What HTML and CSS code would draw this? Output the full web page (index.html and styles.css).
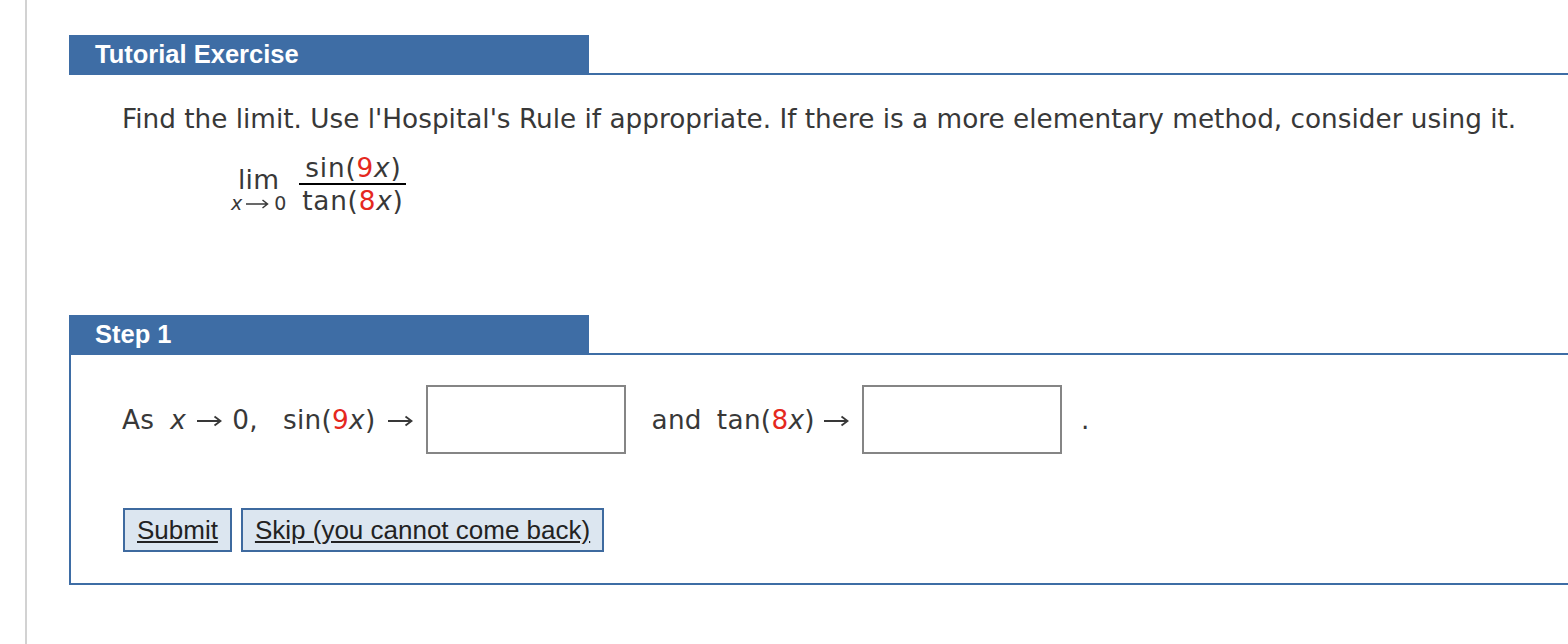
FILE: index.html
```html
<!DOCTYPE html>
<html>
<head>
<meta charset="utf-8">
<link rel="stylesheet" href="styles.css">
</head>
<body>
<div class="page">
  <section class="sec sec-tutorial">
    <div class="sec-head"><div class="tab">Tutorial Exercise</div></div>
    <div class="problem">
      <p class="prompt">Find the limit. Use l'Hospital's Rule if appropriate. If there is a more elementary method, consider using it.</p>
      <div class="limit">
        <div class="lim-col">
          <span class="lim">lim</span>
          <span class="sub"><i>x</i><svg class="arr-s" width="24" height="10" viewBox="0 0 24 10"><path d="M1 5H22.5M17.5 1L22.5 5L17.5 9" fill="none" stroke="#383838" stroke-width="1.5"/></svg>0</span>
        </div>
        <div class="frac">
          <span class="num">sin(<span class="red">9</span><i>x</i>)</span>
          <span class="den">tan(<span class="red">8</span><i>x</i>)</span>
        </div>
      </div>
    </div>
  </section>

  <section class="sec sec-step">
    <div class="sec-head"><div class="tab">Step 1</div></div>
    <div class="step-body">
      <div class="row">
        <span class="t-as">As</span>
        <i class="t-x">x</i>
        <svg class="arr" width="26" height="12" viewBox="0 0 26 12"><path d="M1 6H24.5M18.5 1.5L24.5 6L18.5 10.5" fill="none" stroke="#383838" stroke-width="1.8"/></svg>
        <span class="t-zero">0,</span>
        <span class="t-fn t-sin">sin(<span class="red">9</span><i>x</i>)</span>
        <svg class="arr" width="26" height="12" viewBox="0 0 26 12"><path d="M1 6H24.5M18.5 1.5L24.5 6L18.5 10.5" fill="none" stroke="#383838" stroke-width="1.8"/></svg>
        <span class="box"></span>
        <span class="t-and">and</span>
        <span class="t-fn t-tan">tan(<span class="red">8</span><i>x</i>)</span>
        <svg class="arr" width="26" height="12" viewBox="0 0 26 12"><path d="M1 6H24.5M18.5 1.5L24.5 6L18.5 10.5" fill="none" stroke="#383838" stroke-width="1.8"/></svg>
        <span class="box"></span>
        <span class="t-dot">.</span>
      </div>
      <div class="buttons">
        <button class="btn">Submit</button>
        <button class="btn">Skip (you cannot come back)</button>
      </div>
    </div>
  </section>
</div>
</body>
</html>
```

FILE: styles.css
```css
html, body {
  margin: 0;
  padding: 0;
  background: #ffffff;
  overflow: hidden;
}
body {
  font-family: "DejaVu Sans", Verdana, sans-serif;
  color: #383838;
}
.page {
  margin-left: 25px;
  border-left: 2px solid #d2d2d2;
  min-height: 644px;
  padding-left: 42px;
  padding-top: 35px;
  box-sizing: border-box;
}
.sec {
  width: 1540px;
}
.sec-head {
  border-bottom: 2px solid #3e6da5;
  display: flex;
}
.tab {
  width: 520px;
  height: 38px;
  background: #3e6da5;
  color: #ffffff;
  font-family: "Liberation Sans", Arial, sans-serif;
  font-weight: bold;
  font-size: 25.5px;
  line-height: 38px;
  padding-left: 26px;
  box-sizing: border-box;
}
.problem {
  padding-left: 53px;
  padding-top: 30px;
  height: 240px;
  box-sizing: border-box;
}
.prompt {
  margin: 0;
  font-size: 26.3px;
  line-height: 28px;
}
.limit {
  display: flex;
  align-items: flex-end;
  margin-left: 109px;
  margin-top: 21px;
}
.lim-col {
  display: flex;
  flex-direction: column;
  align-items: center;
  padding-bottom: 3px;
}
.lim {
  font-size: 26.5px;
  line-height: 24px;
  letter-spacing: 0.3px;
}
.sub {
  font-size: 19px;
  line-height: 22px;
  display: flex;
  align-items: center;
}
.arr-s {
  margin: 2px 5px 0 3px;
}
.frac {
  display: flex;
  flex-direction: column;
  align-items: center;
  margin-left: 13px;
  font-size: 26.3px;
  letter-spacing: 0.8px;
}
.num {
  line-height: 29px;
  border-bottom: 2px solid #000;
  padding: 0 5px 0 6px;
}
.den {
  line-height: 32px;
}
.red {
  color: #e5281e;
}
i {
  font-style: italic;
}
.step-body {
  border-left: 2px solid #3e6da5;
  border-bottom: 2px solid #3e6da5;
  padding: 30px 0 31px 51px;
}
.row {
  display: flex;
  align-items: center;
  font-size: 26.3px;
  letter-spacing: 0.3px;
}
.t-as {
  margin-right: 16px;
}
.t-x {
  margin-right: 10px;
}
.arr {
  flex: none;
  margin-top: 2px;
}
.t-zero {
  margin-left: 10px;
  margin-right: 25px;
}
.t-sin {
  margin-right: 12px;
}
.t-tan {
  margin-right: 8px;
}
.t-and {
  margin-left: 25px;
  margin-right: 15px;
}
.box {
  display: block;
  flex: none;
  width: 200px;
  height: 69px;
  border: 2px solid #858585;
  box-sizing: border-box;
  margin-left: 13px;
  background: #fff;
}
.t-dot {
  margin-left: 19px;
}
.buttons {
  display: flex;
  gap: 9px;
  margin-top: 54px;
  margin-left: 1px;
}
.btn {
  font-family: "Liberation Sans", Arial, sans-serif;
  font-size: 26px;
  line-height: 40px;
  height: 44px;
  padding: 0 12px;
  border: 2px solid #3e6a9f;
  background: #dce6f0;
  color: #222;
  text-decoration: underline;
  border-radius: 0;
  margin: 0;
}
```
